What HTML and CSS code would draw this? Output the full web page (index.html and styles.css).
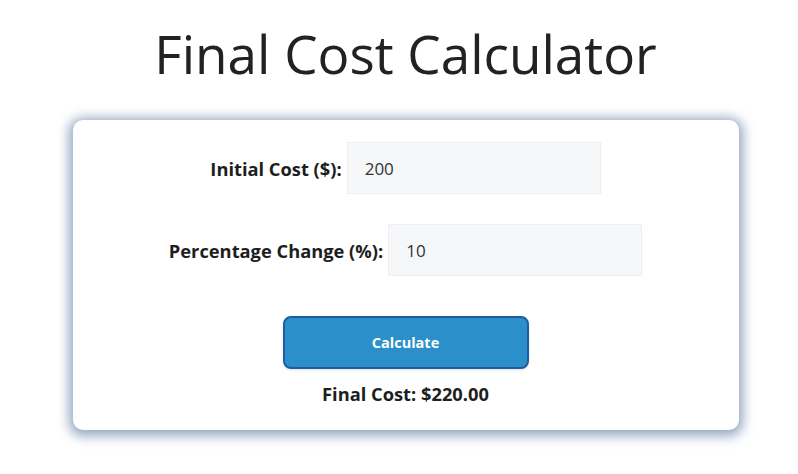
FILE: index.html
```html
<!DOCTYPE html>
<html>
<head>
<meta charset="utf-8">
<link rel="stylesheet" href="styles.css">
</head>
<body>
<h1 class="title">Final Cost Calculator</h1>
<div class="card">
  <div class="row">
    <label class="label" for="cost">Initial Cost ($):</label>
    <input class="field" id="cost" type="text" value="200">
  </div>
  <div class="row">
    <label class="label" for="pct">Percentage Change (%):</label>
    <input class="field" id="pct" type="text" value="10">
  </div>
  <button class="btn" type="button">Calculate</button>
  <div class="result">Final Cost: $220.00</div>
</div>
</body>
</html>
```
FILE: styles.css
```css
html, body {
  margin: 0;
  padding: 0;
  background: #ffffff;
}
body {
  padding-left: 13px;
  padding-bottom: 30px;
  font-family: "Open Sans", "Noto Sans", sans-serif;
  color: #222222;
}
.title {
  margin: 18px 0 0;
  height: 102px;
  font-size: 53px;
  font-weight: 400;
  line-height: 72px;
  text-align: center;
  color: #222222;
}
.card {
  width: 666px;
  height: 310px;
  box-sizing: border-box;
  margin: 0 auto;
  background: #ffffff;
  border-radius: 10px;
  box-shadow: 0 2px 12px 4px rgba(75, 110, 155, 0.6);
  padding-top: 22px;
  display: flex;
  flex-direction: column;
  align-items: center;
}
.row {
  display: flex;
  align-items: center;
  gap: 5px;
  margin-bottom: 30px;
}
.row + .row {
  margin-bottom: 40px;
}
.label {
  font-size: 18.3px;
  font-weight: 700;
  color: #1e1e1e;
}
.field {
  width: 254px;
  height: 52px;
  box-sizing: border-box;
  border: 1px solid #eceef1;
  background: #f6f7f9;
  padding: 0 17px;
  font-family: "Open Sans", "Noto Sans", sans-serif;
  font-size: 17px;
  color: #333333;
  outline: none;
}
.btn {
  width: 246px;
  height: 53px;
  border: 2px solid #1c5fa0;
  border-radius: 8px;
  background: #2b8fc9;
  color: #ffffff;
  font-family: "Open Sans", "Noto Sans", sans-serif;
  font-size: 14.5px;
  font-weight: 700;
  box-shadow: 0 1px 3px rgba(0, 0, 0, 0.12);
}
.result {
  margin-top: 12px;
  font-size: 18.3px;
  font-weight: 700;
  color: #1e1e1e;
}
```
